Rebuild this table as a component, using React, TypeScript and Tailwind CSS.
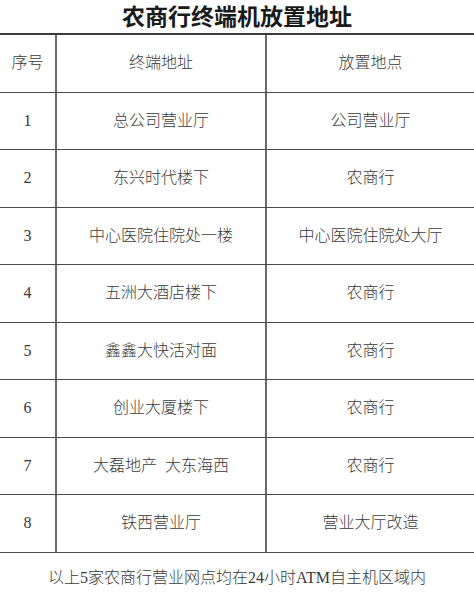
import React from "react";

const rows = [
  ["1", "总公司营业厅", "公司营业厅"],
  ["2", "东兴时代楼下", "农商行"],
  ["3", "中心医院住院处一楼", "中心医院住院处大厅"],
  ["4", "五洲大酒店楼下", "农商行"],
  ["5", "鑫鑫大快活对面", "农商行"],
  ["6", "创业大厦楼下", "农商行"],
  ["7", "大磊地产  大东海西", "农商行"],
  ["8", "铁西营业厅", "营业大厅改造"],
];

const font = { fontFamily: '"Liberation Serif", "Noto Sans CJK SC", serif' };

function Row({ cells }: { cells: string[] }) {
  return (
    <div className="grid grid-cols-[55px_210px_209px] h-[57.5px] border-b-[1.5px] border-[#4a4a4a]">
      {cells.map((c, i) => (
        <div
          key={i}
          className={`flex items-center justify-center whitespace-pre text-[16px] text-[#3a3a3a] font-light ${
            i > 0 ? "border-l-2 border-[#6a6a6a]" : ""
          }`}
        >
          {c}
        </div>
      ))}
    </div>
  );
}

export default function App() {
  return (
    <div className="w-[474px] h-[604px] bg-white flex flex-col overflow-hidden" style={font}>
      <div className="h-[33px] pt-[3px] flex items-center justify-center text-[23px] font-bold text-[#1a1a1a]">
        农商行终端机放置地址
      </div>
      <div className="border-t-2 border-[#3a3a3a]">
        <Row cells={["序号", "终端地址", "放置地点"]} />
        {rows.map((r) => (
          <Row key={r[0]} cells={r} />
        ))}
      </div>
      <div className="flex-1 flex items-center justify-center text-[16px] text-[#3a3a3a] font-light">
        以上5家农商行营业网点均在24小时ATM自主机区域内
      </div>
    </div>
  );
}
